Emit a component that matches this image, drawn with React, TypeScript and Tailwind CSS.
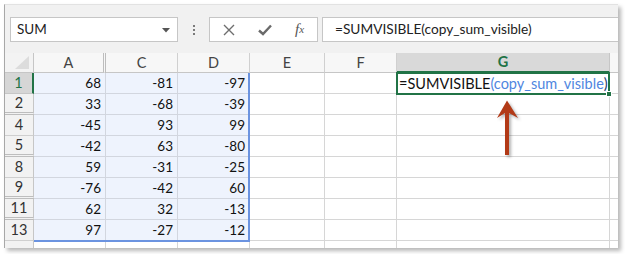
import React from "react";

const rows = [
  { n: "1", a: "68", c: "-81", d: "-97", hid: false },
  { n: "2", a: "33", c: "-68", d: "-39", hid: true },
  { n: "4", a: "-45", c: "93", d: "99", hid: false },
  { n: "5", a: "-42", c: "63", d: "-80", hid: true },
  { n: "8", a: "59", c: "-31", d: "-25", hid: false },
  { n: "9", a: "-76", c: "-42", d: "60", hid: true },
  { n: "11", a: "62", c: "32", d: "-13", hid: true },
  { n: "13", a: "97", c: "-27", d: "-12", hid: false },
];

const font = "font-['Lato','Liberation_Sans',sans-serif]";

function ColHead({ label, double, active }: { label: string; double?: boolean; active?: boolean }) {
  return (
    <div
      className={
        "flex items-center justify-center text-[14.5px] " +
        (active
          ? "bg-[#d9d9d9] text-[#217346] font-bold border-b-2 border-b-[#217346] border-r border-r-[#c6c6c6]"
          : "bg-[#f7f7f7] text-[#444] border-b border-b-[#c6c6c6] ") +
        (active ? "" : double ? "border-r-[3px] border-double border-r-[#bdbdbd]" : "border-r border-r-[#d0d0d0]")
      }
    >
      {label}
    </div>
  );
}

function Cell({ v, sel }: { v?: string; sel?: boolean }) {
  return (
    <div
      className={
        "flex items-end justify-end pr-[4px] pb-[1px] text-[13.5px] leading-[18px] text-[#111] border-r border-b " +
        (sel ? "bg-[#eef3fd] border-[#d2d6df]" : "bg-white border-[#d6d6d6]")
      }
    >
      {v}
    </div>
  );
}

export default function App() {
  return (
    <div className={"w-[625px] h-[254px] bg-white pt-[4px] pl-[4px] " + font}>
      <div className="relative w-[614px] h-[244px] bg-white border-l border-t border-l-[#a8a8a8] border-t-[#e2e2e2] shadow-[3px_3px_4px_rgba(0,0,0,0.28)] overflow-hidden">
        {/* toolbar */}
        <div className="h-[48px] bg-[#f1f1f1] flex items-start pt-[12px] pl-[5px]">
          <div className="relative w-[168px] h-[25px] bg-white border border-[#c6c6c6] flex items-center pl-[6px] text-[13.5px] text-[#222]">
            SUM
            <svg className="absolute right-[7px] top-[10px]" width="8" height="5" viewBox="0 0 8 5">
              <polygon points="0,0 8,0 4,4.5" fill="#555" />
            </svg>
          </div>
          <div className="w-[31px] h-[25px] flex flex-col items-center justify-center gap-[2px]">
            <div className="w-[2px] h-[2px] bg-[#7a7a7a]" />
            <div className="w-[2px] h-[2px] bg-[#7a7a7a]" />
            <div className="w-[2px] h-[2px] bg-[#7a7a7a]" />
          </div>
          <div className="w-[109px] h-[25px] bg-white border border-[#c6c6c6] flex items-center">
            <div className="w-[37px] flex justify-center">
              <svg width="12" height="12" viewBox="0 0 12 12">
                <path d="M1 1 L11 11 M11 1 L1 11" stroke="#6e6e6e" strokeWidth="1.4" />
              </svg>
            </div>
            <div className="w-[35px] flex justify-center">
              <svg width="14" height="12" viewBox="0 0 14 12">
                <path d="M1 6.5 L5 10 L13 1.5" stroke="#6a6a6a" strokeWidth="2.4" fill="none" />
              </svg>
            </div>
            <div className="w-[35px] flex justify-center font-['Liberation_Serif',serif] italic text-[15px] text-[#555] leading-none">
              f<span className="text-[11px] relative top-[2px]">x</span>
            </div>
          </div>
          <div className="ml-[4px] flex-1 h-[25px] bg-white border border-[#c6c6c6] border-r-0 flex items-center pl-[12px] text-[13.7px] text-[#222]">
            =SUMVISIBLE(copy_sum_visible)
          </div>
        </div>

        {/* grid */}
        <div className="relative grid grid-cols-[29px_72px_72px_72px_75px_72px_213px_8px] grid-rows-[20px_repeat(8,21px)_7px]">
          <div className="relative bg-[#f3f3f3] border-r border-b border-[#c6c6c6]">
            <svg className="absolute right-[4px] bottom-[3px]" width="14" height="13" viewBox="0 0 14 13">
              <polygon points="14,0 14,13 0,13" fill="#dcdcdc" />
            </svg>
          </div>
          <ColHead label="A" double />
          <ColHead label="C" />
          <ColHead label="D" />
          <ColHead label="E" />
          <ColHead label="F" />
          <ColHead label="G" active />
          <div className="bg-[#f7f7f7] border-b border-[#c6c6c6]" />

          {rows.map((r, i) => (
            <React.Fragment key={r.n}>
              <div
                className={
                  "flex items-center justify-center text-[14.5px] " +
                  (i === 0
                    ? "bg-[#d6d6d6] text-[#217346] border-r-2 border-r-[#217346] border-b border-b-[#c6c6c6]"
                    : "bg-[#f2f2f2] text-[#333] border-r border-r-[#c6c6c6] ") +
                  (i === 0 ? "" : r.hid ? "border-b-[3px] border-double border-b-[#bdbdbd]" : "border-b border-b-[#cfcfcf]")
                }
              >
                {r.n}
              </div>
              <Cell v={r.a} sel />
              <Cell v={r.c} sel />
              <Cell v={r.d} sel />
              <Cell />
              <Cell />
              <Cell />
              <div className="bg-white border-b border-[#d6d6d6]" />
            </React.Fragment>
          ))}

          <div className="bg-[#f2f2f2] border-r border-[#c6c6c6]" />
          <div className="border-r border-[#d6d6d6]" />
          <div className="border-r border-[#d6d6d6]" />
          <div className="border-r border-[#d6d6d6]" />
          <div className="border-r border-[#d6d6d6]" />
          <div className="border-r border-[#d6d6d6]" />
          <div className="border-r border-[#d6d6d6]" />
          <div />

          {/* referenced range border */}
          <div className="absolute left-[29px] top-[20px] w-[216px] h-[169px] border-r-2 border-b-2 border-[#6b93e0] pointer-events-none" />

          {/* active cell */}
          <div className="absolute left-[391px] top-[19px] w-[214px] h-[23px] border-2 border-[#217346] flex items-end pl-[1px] text-[14.5px] leading-[19px] text-[#111] whitespace-nowrap">
            <span>=SUMVISIBLE</span>
            <span className="text-[#4f86e0]">(copy_sum_visible</span>
            <span className="text-[#1d3a6e]">)</span>
            <div className="absolute right-[-4px] bottom-[-4px] w-[6px] h-[6px] bg-[#217346] border border-white" />
          </div>

          {/* arrow */}
          <svg className="absolute left-[485px] top-[45px] drop-shadow-[2px_2px_1.5px_rgba(0,0,0,0.3)]" width="36" height="64" viewBox="0 0 36 64">
            <path d="M17 2.5 L28 20 L19 15 L19 57 L15 57 L15 15 L7 20 Z" fill="#b23a17" />
          </svg>
        </div>
      </div>
    </div>
  );
}
